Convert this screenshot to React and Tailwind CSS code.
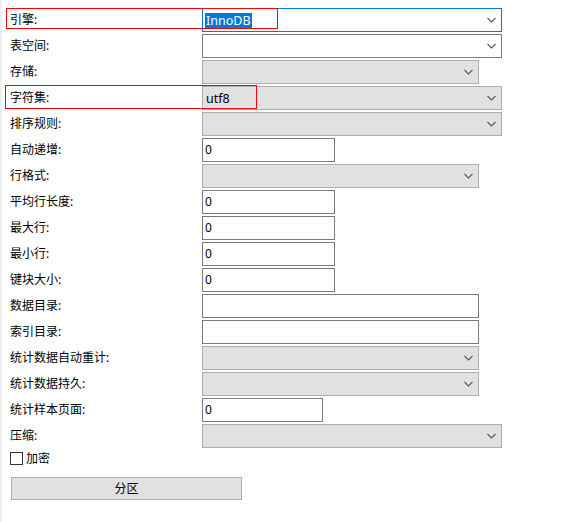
import React from "react";

const font = { fontFamily: '"Noto Sans", "Noto Sans CJK SC", sans-serif' };

function Chevron() {
  return (
    <svg width="9" height="6" viewBox="0 0 9 6" className="absolute right-[5px] top-1/2 -translate-y-1/2">
      <polyline points="0.5,1 4.5,5 8.5,1" fill="none" stroke="#5a5a5a" strokeWidth="1.1" />
    </svg>
  );
}

function Combo({ w, variant = "disabled", value, selected }) {
  const cls =
    variant === "focus"
      ? "bg-white border-[#0078d7]"
      : variant === "white"
      ? "bg-white border-[#7a7a7a]"
      : "bg-[#e1e1e1] border-[#adadad]";
  return (
    <div className={`relative h-[24px] border ${cls} flex items-center pl-[2px]`} style={{ width: w }}>
      {value && (
        <span
          className={`text-[12.5px] leading-[15px] px-[1px] ${selected ? "bg-[#0078d7] text-white" : "text-black"}`}
        >
          {value}
        </span>
      )}
      <Chevron />
    </div>
  );
}

function Input({ w, value }) {
  return (
    <div className="h-[24px] border border-[#7a7a7a] bg-white flex items-center pl-[2px] text-[12px] text-black" style={{ width: w }}>
      {value}
    </div>
  );
}

const rows = [
  ["引擎:", <Combo w={300} variant="focus" value="InnoDB" selected />],
  ["表空间:", <Combo w={300} variant="white" />],
  ["存储:", <Combo w={277} />],
  ["字符集:", <Combo w={300} value="utf8" />],
  ["排序规则:", <Combo w={300} />],
  ["自动递增:", <Input w={133} value="0" />],
  ["行格式:", <Combo w={277} />],
  ["平均行长度:", <Input w={133} value="0" />],
  ["最大行:", <Input w={133} value="0" />],
  ["最小行:", <Input w={133} value="0" />],
  ["键块大小:", <Input w={133} value="0" />],
  ["数据目录:", <Input w={277} />],
  ["索引目录:", <Input w={277} />],
  ["统计数据自动重计:", <Combo w={277} />],
  ["统计数据持久:", <Combo w={277} />],
  ["统计样本页面:", <Input w={121} value="0" />],
  ["压缩:", <Combo w={300} />],
];

export default function App() {
  return (
    <div className="relative w-[565px] h-[522px] bg-white border-l-2 border-[#f0f0f0] overflow-hidden text-black" style={font}>
      <div className="flex flex-col gap-[2px] pt-[8px]">
        {rows.map(([label, ctrl], i) => (
          <div key={i} className="flex items-center h-[24px]">
            <div className="w-[200px] pl-[8px] text-[12px] leading-[14px]">{label}</div>
            {ctrl}
          </div>
        ))}
      </div>
      <div className="flex items-center gap-[3px] pl-[8px] mt-[4px] h-[13px]">
        <div className="w-[13px] h-[13px] border border-[#333333] bg-white" />
        <span className="text-[12px] leading-[14px]">加密</span>
      </div>
      <div className="pl-[9px] mt-[12px]">
        <div className="w-[231px] h-[23px] bg-[#e1e1e1] border border-[#adadad] flex items-center justify-center text-[12px]">
          分区
        </div>
      </div>
      <div className="absolute left-[4px] top-[8px] w-[272px] h-[21px] border border-[#ff0000] pointer-events-none" />
      <div className="absolute left-[3px] top-[85px] w-[252px] h-[24px] border border-[#ff0000] pointer-events-none" />
    </div>
  );
}
